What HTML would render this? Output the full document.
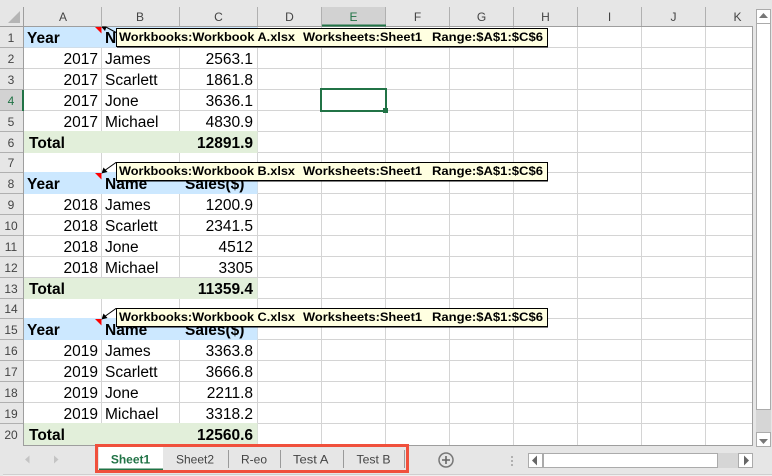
<!DOCTYPE html>
<html><head><meta charset="utf-8"><style>
html,body{margin:0;padding:0;background:#e6e6e6;width:772px;height:476px;overflow:hidden}
svg{display:block;font-family:"Liberation Sans",sans-serif}
.c{font-size:15.5px;fill:#000}
.b{font-size:15.5px;font-weight:bold;fill:#000}
.e{text-anchor:end}
.h{font-size:12px;fill:#444;text-anchor:middle}
.t{font-size:12px;font-weight:bold;fill:#000}
.s{font-size:12px;fill:#444;text-anchor:middle}
</style></head><body>
<svg width="772" height="476" viewBox="0 0 772 476" xmlns="http://www.w3.org/2000/svg">
<rect width="772" height="476" fill="#e6e6e6"/>
<rect x="24" y="27" width="729" height="419" fill="#fff"/>
<rect x="322" y="7" width="64" height="19" fill="#d2d2d2"/>
<rect x="0" y="90" width="23" height="20" fill="#d2d2d2"/>
<path d="M8 23L20 11V23Z" fill="#b5b5b5"/>
<!-- grid -->
<path stroke="#d4d4d4" stroke-width="1" fill="none" d="M101.500 27V446M179.500 27V446M257.500 27V446M321.500 27V446M385.500 27V446M449.500 27V446M513.500 27V446M577.500 27V446M641.500 27V446M705.500 27V446
M24 47.500H752M24 68.500H752M24 89.500H752M24 110.500H752M24 131.500H752M24 152.500H752M24 172.500H752M24 193.500H752M24 214.500H752M24 235.500H752M24 256.500H752M24 277.500H752M24 298.500H752M24 318.500H752M24 339.500H752M24 360.500H752M24 381.500H752M24 402.500H752M24 423.500H752"/>
<rect x="24" y="27" width="233.500" height="20.500" fill="#cce8ff"/>
<rect x="24" y="172" width="233.500" height="22" fill="#cce8ff"/>
<rect x="24" y="318" width="233.500" height="22" fill="#cce8ff"/>
<rect x="24" y="131" width="233.500" height="22" fill="#e2efda"/>
<rect x="24" y="278" width="233.500" height="21" fill="#e2efda"/>
<rect x="24" y="423" width="233.500" height="23" fill="#e2efda"/>
<!-- header separators -->
<path stroke="#b0b0b0" fill="none" d="M101.500 7V26M179.500 7V26M257.500 7V26M321.500 7V26M385.500 7V26M449.500 7V26M513.500 7V26M577.500 7V26M641.500 7V26M705.500 7V26
M0 47.500H23M0 68.500H23M0 89.500H23M0 110.500H23M0 131.500H23M0 152.500H23M0 172.500H23M0 193.500H23M0 214.500H23M0 235.500H23M0 256.500H23M0 277.500H23M0 298.500H23M0 318.500H23M0 339.500H23M0 360.500H23M0 381.500H23M0 402.500H23M0 423.500H23"/>
<path stroke="#9e9e9e" fill="none" d="M23.500 7V446M0 26.500H753M752.500 26V446M23 445.500H753"/>
<rect x="322" y="24.500" width="64" height="2" fill="#217346"/>
<rect x="22" y="90" width="2" height="21" fill="#217346"/>
<!-- col headers -->
<text class="h" x="63" y="21">A</text><text class="h" x="140" y="21">B</text><text class="h" x="218.500" y="21">C</text><text class="h" x="289.500" y="21">D</text><text class="h" x="353.500" y="21" style="fill:#217346">E</text><text class="h" x="417.500" y="21">F</text><text class="h" x="481.500" y="21">G</text><text class="h" x="545.500" y="21">H</text><text class="h" x="609.500" y="21">I</text><text class="h" x="673.500" y="21">J</text><text class="h" x="737.500" y="21">K</text>
<!-- row headers -->
<text class="h" x="11" y="42">1</text><text class="h" x="11" y="63">2</text><text class="h" x="11" y="84">3</text><text class="h" x="11" y="105" style="fill:#217346">4</text><text class="h" x="11" y="126">5</text><text class="h" x="11" y="147">6</text><text class="h" x="11" y="167">7</text><text class="h" x="11" y="188">8</text><text class="h" x="11" y="209">9</text><text class="h" x="11" y="230">10</text><text class="h" x="11" y="251">11</text><text class="h" x="11" y="272">12</text><text class="h" x="11" y="293">13</text><text class="h" x="11" y="313">14</text><text class="h" x="11" y="334">15</text><text class="h" x="11" y="355">16</text><text class="h" x="11" y="376">17</text><text class="h" x="11" y="397">18</text><text class="h" x="11" y="418">19</text><text class="h" x="11" y="439">20</text>
<!-- table 1 -->
<text class="b" x="27" y="43">Year</text><text class="b" x="105" y="43">Name</text><text class="b" x="185" y="43">Sales($)</text>
<text class="c e" x="98" y="64">2017</text><text class="c" x="105" y="64">James</text><text class="c e" x="253" y="64">2563.1</text>
<text class="c e" x="98" y="85">2017</text><text class="c" x="105" y="85">Scarlett</text><text class="c e" x="253" y="85">1861.8</text>
<text class="c e" x="98" y="106">2017</text><text class="c" x="105" y="106">Jone</text><text class="c e" x="253" y="106">3636.1</text>
<text class="c e" x="98" y="127">2017</text><text class="c" x="105" y="127">Michael</text><text class="c e" x="253" y="127">4830.9</text>
<text class="b" x="29" y="148">Total</text><text class="b e" x="253" y="148">12891.9</text>
<!-- table 2 -->
<text class="b" x="27" y="189">Year</text><text class="b" x="105" y="189">Name</text><text class="b" x="185" y="189">Sales($)</text>
<text class="c e" x="98" y="210">2018</text><text class="c" x="105" y="210">James</text><text class="c e" x="253" y="210">1200.9</text>
<text class="c e" x="98" y="231">2018</text><text class="c" x="105" y="231">Scarlett</text><text class="c e" x="253" y="231">2341.5</text>
<text class="c e" x="98" y="252">2018</text><text class="c" x="105" y="252">Jone</text><text class="c e" x="253" y="252">4512</text>
<text class="c e" x="98" y="273">2018</text><text class="c" x="105" y="273">Michael</text><text class="c e" x="253" y="273">3305</text>
<text class="b" x="29" y="294">Total</text><text class="b e" x="253" y="294">11359.4</text>
<!-- table 3 -->
<text class="b" x="27" y="335">Year</text><text class="b" x="105" y="335">Name</text><text class="b" x="185" y="335">Sales($)</text>
<text class="c e" x="98" y="356">2019</text><text class="c" x="105" y="356">James</text><text class="c e" x="253" y="356">3363.8</text>
<text class="c e" x="98" y="377">2019</text><text class="c" x="105" y="377">Scarlett</text><text class="c e" x="253" y="377">3666.8</text>
<text class="c e" x="98" y="398">2019</text><text class="c" x="105" y="398">Jone</text><text class="c e" x="253" y="398">2211.8</text>
<text class="c e" x="98" y="419">2019</text><text class="c" x="105" y="419">Michael</text><text class="c e" x="253" y="419">3318.2</text>
<text class="b" x="29" y="440">Total</text><text class="b e" x="253" y="440">12560.6</text>
<!-- comment indicators -->
<path d="M95 27H101.500V33.500Z" fill="#f00"/>
<path d="M95 173H101.500V179.500Z" fill="#f00"/>
<path d="M95 319H101.500V325.500Z" fill="#f00"/>
<!-- arrows -->
<path d="M102 27H106L117 33" fill="none" stroke="#000"/><path d="M101.500 27L106.500 27L105 31Z" fill="#000"/>
<path d="M117 162.500H116L104 171" fill="none" stroke="#000"/><path d="M101.500 173.500L103.500 167.500L107.500 172Z" fill="#000"/>
<path d="M117 308.500H116L104 317" fill="none" stroke="#000"/><path d="M101.500 319.500L103.500 313.500L107.500 318Z" fill="#000"/>
<!-- tooltips -->
<rect x="116.500" y="28.500" width="431" height="18" fill="#ffffe1" stroke="#000"/>
<path d="M117 47H548" stroke="#000" fill="none"/>
<text class="t" x="119" y="41" textLength="176" lengthAdjust="spacingAndGlyphs">Workbooks:Workbook A.xlsx</text><text class="t" x="303" y="41" textLength="119" lengthAdjust="spacingAndGlyphs">Worksheets:Sheet1</text><text class="t" x="432" y="41" textLength="111" lengthAdjust="spacingAndGlyphs">Range:$A$1:$C$6</text>
<rect x="116.500" y="162.500" width="431" height="18" fill="#ffffe1" stroke="#000"/>
<path d="M117 181H548" stroke="#000" fill="none"/>
<text class="t" x="119" y="175" textLength="176" lengthAdjust="spacingAndGlyphs">Workbooks:Workbook B.xlsx</text><text class="t" x="303" y="175" textLength="119" lengthAdjust="spacingAndGlyphs">Worksheets:Sheet1</text><text class="t" x="432" y="175" textLength="111" lengthAdjust="spacingAndGlyphs">Range:$A$1:$C$6</text>
<rect x="116.500" y="308.500" width="431" height="18" fill="#ffffe1" stroke="#000"/>
<path d="M117 327H548" stroke="#000" fill="none"/>
<text class="t" x="119" y="321" textLength="176" lengthAdjust="spacingAndGlyphs">Workbooks:Workbook C.xlsx</text><text class="t" x="303" y="321" textLength="119" lengthAdjust="spacingAndGlyphs">Worksheets:Sheet1</text><text class="t" x="432" y="321" textLength="111" lengthAdjust="spacingAndGlyphs">Range:$A$1:$C$6</text>
<!-- selection -->
<rect x="321" y="89" width="65" height="22" fill="none" stroke="#217346" stroke-width="2"/>
<rect x="383" y="108" width="5" height="5" fill="#217346"/>
<!-- vertical scrollbar -->
<rect x="756.500" y="9.500" width="14" height="400" fill="#fff" stroke="#ababab"/>
<rect x="756.500" y="9.500" width="14" height="14" fill="#fff" stroke="#ababab"/>
<path d="M759 18L763.500 13L768 18Z" fill="#777"/>
<rect x="756" y="410" width="15" height="22" fill="#d6d6d6"/>
<rect x="756.500" y="432.500" width="14" height="14" fill="#fff" stroke="#ababab"/>
<path d="M759 439H768L763.500 444Z" fill="#777"/>
<!-- sheet bar -->
<rect x="99" y="447" width="64" height="23" fill="#fff"/>
<rect x="99" y="468.500" width="64" height="2" fill="#217346"/>
<path stroke="#9a9a9a" fill="none" d="M228.500 450V468M280.500 450V468M343.500 450V468M404.500 450V468"/>
<text x="130.500" y="463.500" style="font-size:12px;font-weight:bold;fill:#217346;text-anchor:middle">Sheet1</text>
<text class="s" x="195" y="463.500">Sheet2</text>
<text class="s" x="254" y="463.500">R-eo</text>
<text class="s" x="293" y="463.500" style="text-anchor:start" textLength="35.500" lengthAdjust="spacingAndGlyphs">Test A</text>
<text class="s" x="356.500" y="463.500" style="text-anchor:start" textLength="34" lengthAdjust="spacingAndGlyphs">Test B</text>
<rect x="96.500" y="445.500" width="311" height="26" fill="none" stroke="#f0503c" stroke-width="3"/>
<path d="M25 459.500L29.500 455.500V463.500Z" fill="#c4c4c4"/><path d="M58.500 459.500L54 455.500V463.500Z" fill="#c4c4c4"/>
<circle cx="446" cy="460" r="7" fill="none" stroke="#777" stroke-width="1.500"/>
<path d="M442 460H450M446 456V464" stroke="#666" stroke-width="1.600" fill="none"/>
<path d="M511 456h2v2h-2zM511 460h2v2h-2zM511 464h2v2h-2z" fill="#b0b0b0"/>
<!-- horizontal scrollbar -->
<rect x="528" y="453" width="225" height="15" fill="#d6d6d6"/>
<rect x="528.500" y="453.500" width="14" height="14" fill="#fff" stroke="#ababab"/>
<path d="M532 460.500L537 455.500V465.500Z" fill="#666"/>
<rect x="543.500" y="453.500" width="174" height="14" fill="#fff" stroke="#ababab"/>
<rect x="738.500" y="453.500" width="14" height="14" fill="#fff" stroke="#ababab"/>
<path d="M749 460.500L744 455.500V465.500Z" fill="#666"/>
<rect x="3" y="474" width="769" height="1" fill="#cfcfcf"/>
<rect x="3" y="475" width="769" height="1" fill="#f0f0f0"/>
</svg>
</body></html>
